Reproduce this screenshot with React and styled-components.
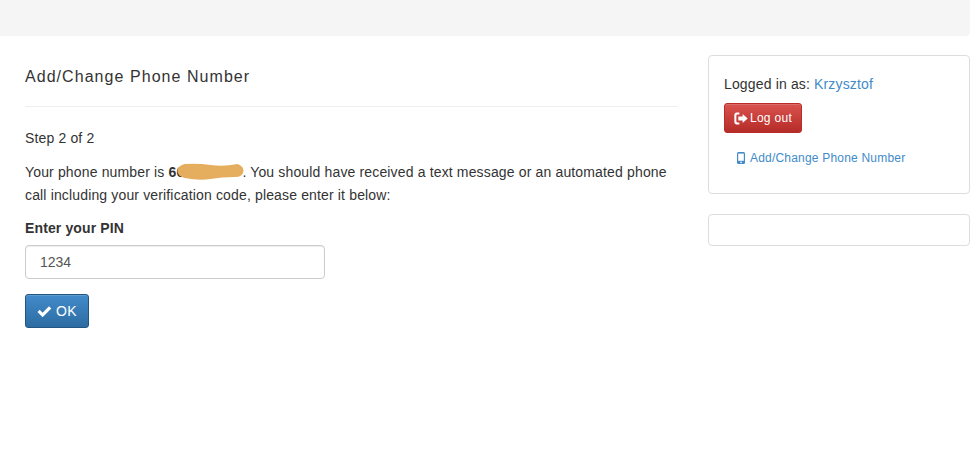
import React from "react";
import styled, { createGlobalStyle } from "styled-components";

const Global = createGlobalStyle`
  html, body { margin: 0; padding: 0; background: #fff; }
  body {
    font-family: "Liberation Sans", Arial, sans-serif;
    font-size: 14px;
    line-height: 23px;
    letter-spacing: 0.15px;
    color: #333;
  }
  * { box-sizing: border-box; }
`;

const Page = styled.div`
  width: 970px;
`;

const TopBar = styled.div`
  height: 36px;
  background: #f5f5f5;
  border-radius: 0 0 4px 0;
`;

const Columns = styled.div`
  display: flex;
  justify-content: space-between;
`;

const Main = styled.main`
  width: 653px;
  margin-left: 25px;
`;

const Heading = styled.h1`
  margin: 0;
  padding: 30px 0 18px;
  font-size: 16px;
  line-height: 22px;
  font-weight: 400;
  letter-spacing: 1.05px;
  border-bottom: 1px solid #eee;
`;

const Paragraph = styled.p`
  margin: ${(p) => p.$top}px 0 0;
`;

const Redacted = styled.span`
  display: inline-block;
  position: relative;
  width: 58px;
  height: 23px;
  vertical-align: top;
`;

const Smear = styled.svg`
  position: absolute;
  left: -7px;
  top: 2px;
  width: 67px;
  height: 17px;
`;

const Label = styled.label`
  display: block;
  margin-top: 10px;
  font-weight: 700;
  letter-spacing: 0.12px;
`;

const Input = styled.input`
  display: block;
  width: 300px;
  height: 34px;
  margin-top: 5px;
  padding: 6px 14px;
  font: inherit;
  letter-spacing: 0;
  color: #555;
  background: #fff;
  border: 1px solid #ccc;
  border-radius: 4px;
  box-shadow: inset 0 1px 1px rgba(0, 0, 0, 0.075);
`;

const Button = styled.button`
  display: inline-flex;
  align-items: center;
  justify-content: center;
  gap: ${(p) => p.$gap}px;
  padding: 0;
  width: ${(p) => p.$width}px;
  height: ${(p) => p.$height}px;
  margin-top: ${(p) => p.$top}px;
  font-family: inherit;
  font-size: ${(p) => p.$size}px;
  letter-spacing: 0.3px;
  color: #fff;
  border: 1px solid ${(p) => p.$border};
  border-radius: 3px;
  background: linear-gradient(to bottom, ${(p) => p.$from}, ${(p) => p.$to});
  box-shadow: inset 0 1px 0 rgba(255, 255, 255, 0.15);
`;

const Side = styled.aside`
  width: 262px;
  padding-top: 19px;
`;

const Panel = styled.section`
  min-height: 32px;
  margin-bottom: 20px;
  padding: ${(p) => (p.$empty ? 0 : "17px 15px 15px")};
  border: 1px solid #ddd;
  border-radius: 4px;
`;

const Link = styled.a`
  color: #428bca;
  text-decoration: none;
`;

const Nav = styled.a`
  display: flex;
  align-items: center;
  gap: 5px;
  height: 24px;
  margin: 13px 0 8px 13px;
  font-size: 12px;
  letter-spacing: 0.2px;
  color: #428bca;
`;

export default function App() {
  return (
    <Page>
      <Global />
      <TopBar />
      <Columns>
        <Main>
          <Heading>Add/Change Phone Number</Heading>
          <Paragraph $top={20}>Step 2 of 2</Paragraph>
          <Paragraph $top={11}>
            Your phone number is <strong>66</strong>
            <Redacted>
              <Smear viewBox="0 0 66 17">
                <path
                  d="M7 1 Q20 0 33 2 T60 1 Q66 3 66 8 Q65 14 58 14 Q44 14 33 16 T7 15 Q0 13 0 8 Q0 3 7 1Z"
                  fill="#e5ad5e"
                />
              </Smear>
            </Redacted>
            . You should have received a text message or an automated phone call including your verification code, please enter it below:
          </Paragraph>
          <Label htmlFor="pin">Enter your PIN</Label>
          <Input id="pin" defaultValue="1234" />
          <Button $width={64} $height={34} $top={15} $size={14} $gap={4} $border="#245580" $from="#428bca" $to="#2d6ca2">
            <svg width="15" height="13" viewBox="0 0 15 13" fill="#fff">
              <path d="M0.5 7 L2.7 4.8 L5.6 7.7 L12 1.2 L14.3 3.5 L5.6 12.2Z" />
            </svg>
            OK
          </Button>
        </Main>
        <Side>
          <Panel>
            <div>
              Logged in as: <Link>Krzysztof</Link>
            </div>
            <Button $width={78} $height={30} $top={7} $size={12} $gap={2} $border="#b92c28" $from="#d9534f" $to="#b52b27">
              <svg width="14" height="13" viewBox="0 0 13 12" fill="#fff">
                <path d="M5 0.5 H2.6 Q0.3 0.5 0.3 3 V8.8 Q0.3 11.5 2.6 11.5 H5 V9.6 H3 Q2.2 9.6 2.2 8.6 V3.3 Q2.2 2.4 3 2.4 H5Z" />
                <path d="M4 4.2 H8 V1.8 L12.7 6 L8 10.2 V7.8 H4Z" />
              </svg>
              Log out
            </Button>
            <Nav>
              <svg width="8" height="12" viewBox="0 0 8 12">
                <rect x="0" y="0" width="8" height="12" rx="1.5" fill="#428bca" />
                <rect x="1.2" y="1.6" width="5.6" height="7.2" fill="#fff" />
                <circle cx="4" cy="10.4" r="0.8" fill="#fff" />
              </svg>
              Add/Change Phone Number
            </Nav>
          </Panel>
          <Panel $empty />
        </Side>
      </Columns>
    </Page>
  );
}
